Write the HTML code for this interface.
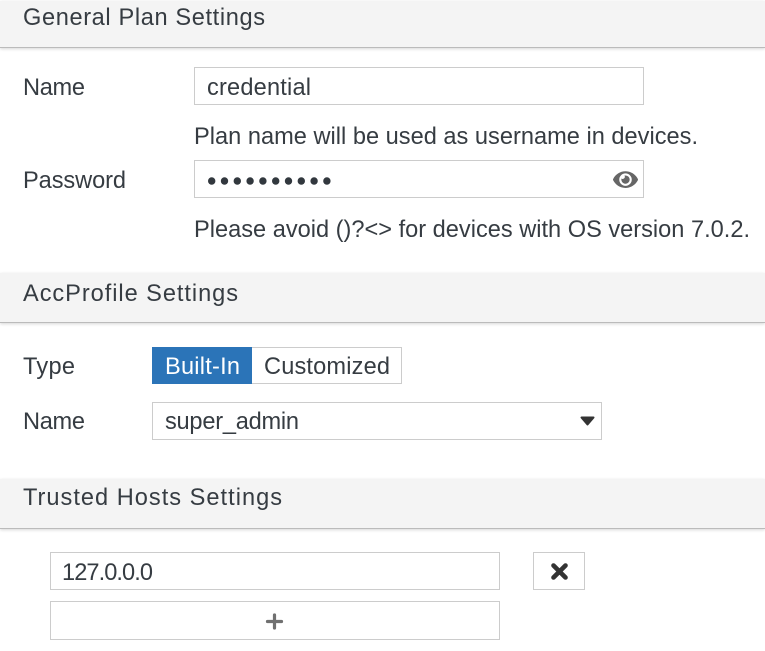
<!DOCTYPE html>
<html><head><meta charset="utf-8">
<style>
html,body{margin:0;padding:0;background:#fff;width:765px;height:651px;overflow:hidden}
.h{position:absolute;left:0;width:765px;background:#f4f4f4;border-bottom:1px solid #bbb;box-shadow:0 1px 3px rgba(0,0,0,.16);box-sizing:border-box}
.b{position:absolute;border:1px solid #ccc;box-sizing:border-box;background:#fff}
svg{position:absolute;left:0;top:0}
text{font-family:"Liberation Sans",sans-serif;font-size:23.6px;fill:#363c42}
</style></head><body>
<div class="h" style="top:1px;height:47px"></div>
<div class="h" style="top:273px;height:50px"></div>
<div class="h" style="top:479px;height:50px"></div>
<div class="b" style="left:194px;top:67px;width:450px;height:38px"></div>
<div class="b" style="left:194px;top:160px;width:450px;height:38px"></div>
<div class="b" style="left:152px;top:347px;width:250px;height:37px"></div>
<div style="position:absolute;left:152px;top:347px;width:100px;height:37px;background:#2b74b8"></div>
<div class="b" style="left:152px;top:402px;width:450px;height:38px"></div>
<div class="b" style="left:50px;top:552px;width:450px;height:38px"></div>
<div class="b" style="left:533px;top:552px;width:52px;height:38px"></div>
<div class="b" style="left:50px;top:601px;width:450px;height:39px"></div>
<svg width="765" height="651" viewBox="0 0 765 651">
<text x="23" y="25" textLength="242" lengthAdjust="spacing">General Plan Settings</text>
<text x="23" y="95" textLength="62" lengthAdjust="spacing">Name</text>
<text x="207" y="95" textLength="104" lengthAdjust="spacing">credential</text>
<text x="194" y="144" textLength="504" lengthAdjust="spacing">Plan name will be used as username in devices.</text>
<text x="23" y="188" textLength="103" lengthAdjust="spacing">Password</text>
<g fill="#32383e">
<circle cx="211.7" cy="181" r="3.7"/><circle cx="224.5" cy="181" r="3.7"/><circle cx="237.3" cy="181" r="3.7"/><circle cx="250.1" cy="181" r="3.7"/><circle cx="262.9" cy="181" r="3.7"/><circle cx="275.7" cy="181" r="3.7"/><circle cx="288.5" cy="181" r="3.7"/><circle cx="301.3" cy="181" r="3.7"/><circle cx="314.1" cy="181" r="3.7"/><circle cx="326.9" cy="181" r="3.7"/>
</g>
<path transform="translate(613 168.5) scale(.0434)" fill="#666" d="M572.52 241.4C518.29 135.59 410.93 64 288 64S57.68 135.64 3.48 241.41a32.35 32.35 0 0 0 0 29.19C57.71 376.41 165.07 448 288 448s230.32-71.64 284.52-177.41a32.35 32.35 0 0 0 0-29.19zM288 400a144 144 0 1 1 144-144 143.93 143.93 0 0 1-144 144zm0-240a95.31 95.31 0 0 0-25.31 3.79 47.85 47.85 0 0 1-66.9 66.9A95.78 95.78 0 1 0 288 160z"/>
<text x="194" y="237" textLength="556" lengthAdjust="spacing">Please avoid ()?&lt;&gt; for devices with OS version 7.0.2.</text>
<text x="23" y="301" textLength="215" lengthAdjust="spacing">AccProfile Settings</text>
<text x="23" y="374" textLength="52" lengthAdjust="spacing">Type</text>
<text x="165" y="374" textLength="75" lengthAdjust="spacing" style="fill:#fff">Built-In</text>
<text x="264" y="374" textLength="126" lengthAdjust="spacing">Customized</text>
<text x="23" y="429" textLength="62" lengthAdjust="spacing">Name</text>
<text x="165" y="429" textLength="134" lengthAdjust="spacing">super_admin</text>
<path d="M581.5 417.5H593.5L587.5 424.5Z" fill="#333" stroke="#333" stroke-width="2" stroke-linejoin="round"/>
<text x="23" y="505" textLength="259" lengthAdjust="spacing">Trusted Hosts Settings</text>
<text x="62" y="580" textLength="91" lengthAdjust="spacing">127.0.0.0</text>
<path d="M553.5 565.5L565.5 577.5M565.5 565.5L553.5 577.5" stroke="#333" stroke-width="4.6" stroke-linecap="round" fill="none"/>
<path d="M274.5 615V628M267.5 621.5H281.5" stroke="#707070" stroke-width="3.2" stroke-linecap="round" fill="none"/>
</svg>
</body></html>
